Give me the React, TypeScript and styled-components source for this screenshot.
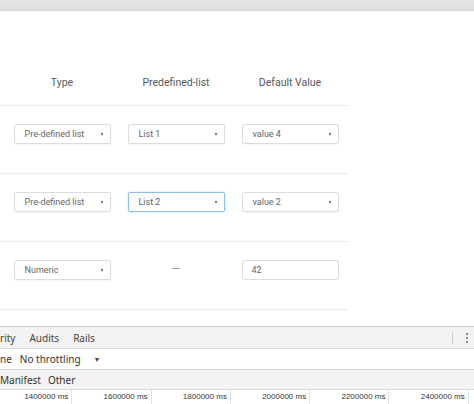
import styled, { createGlobalStyle } from "styled-components";

const Global = createGlobalStyle`
  html, body { margin: 0; padding: 0; background: #fff; overflow: hidden; }
  * { box-sizing: border-box; }
`;

type Cell =
  | { kind: "select"; value: string; focused?: boolean }
  | { kind: "input"; value: string }
  | { kind: "none" };

const rows: Cell[][] = [
  [
    { kind: "select", value: "Pre-defined list" },
    { kind: "select", value: "List 1" },
    { kind: "select", value: "value 4" },
  ],
  [
    { kind: "select", value: "Pre-defined list" },
    { kind: "select", value: "List 2", focused: true },
    { kind: "select", value: "value 2" },
  ],
  [
    { kind: "select", value: "Numeric" },
    { kind: "none" },
    { kind: "input", value: "42" },
  ],
];

const ticks = ["1400000 ms", "1600000 ms", "1800000 ms", "2000000 ms", "2200000 ms", "2400000 ms"];

export default function App() {
  return (
    <Page>
      <Global />
      <TopBar />
      <Content>
        <Table>
          <HeaderRow>
            <HeadCell>Type</HeadCell>
            <HeadCell>Predefined-list</HeadCell>
            <HeadCell>Default Value</HeadCell>
          </HeaderRow>
          {rows.map((row, i) => (
            <Row key={i}>
              {row.map((cell, j) => (
                <BodyCell key={j}>
                  {cell.kind === "select" && (
                    <Select $focused={cell.focused}>
                      <span>{cell.value}</span>
                      <Caret />
                    </Select>
                  )}
                  {cell.kind === "input" && <Input>{cell.value}</Input>}
                  {cell.kind === "none" && <Empty>---</Empty>}
                </BodyCell>
              ))}
            </Row>
          ))}
        </Table>
      </Content>
      <DevTools>
        <TabBar>
          <Tab>rity</Tab>
          <Tab>Audits</Tab>
          <Tab>Rails</Tab>
          <Spacer />
          <Separator />
          <Kebab>
            <i />
            <i />
            <i />
          </Kebab>
        </TabBar>
        <ThrottleBar>
          <ToolText>ne</ToolText>
          <ToolText>No throttling</ToolText>
          <DropArrow>▼</DropArrow>
        </ThrottleBar>
        <FilterBar>
          <ToolText>Manifest</ToolText>
          <ToolText>Other</ToolText>
        </FilterBar>
        <Timeline>
          {ticks.map((t) => (
            <Tick key={t}>{t}</Tick>
          ))}
        </Timeline>
      </DevTools>
    </Page>
  );
}

const Page = styled.div`
  width: 474px;
  height: 404px;
  display: flex;
  flex-direction: column;
  overflow: hidden;
`;

const TopBar = styled.div`
  height: 11px;
  flex: none;
  background: linear-gradient(#e6e6e6, #dedede);
  border-bottom: 1px solid #d8d8d8;
`;

const Content = styled.div`
  flex: 1;
  background: #fff;
`;

const Table = styled.div`
  width: 348px;
  display: flex;
  flex-direction: column;
`;

const HeaderRow = styled.div`
  height: 95px;
  display: grid;
  grid-template-columns: repeat(3, 114px);
  padding-left: 5px;
  align-items: end;
  padding-bottom: 15px;
  border-bottom: 1px solid #ebebeb;
`;

const HeadCell = styled.div`
  font-family: Roboto, "Liberation Sans", sans-serif;
  font-size: 10.5px;
  line-height: 14px;
  color: #595959;
  text-align: center;
`;

const Row = styled.div`
  height: 68px;
  display: grid;
  grid-template-columns: repeat(3, 114px);
  padding-left: 5px;
  padding-top: 18px;
  border-bottom: 1px solid #ebebeb;
`;

const BodyCell = styled.div`
  display: flex;
  justify-content: center;
  align-items: flex-start;
`;

const Select = styled.div<{ $focused?: boolean }>`
  width: 97px;
  height: 20px;
  display: flex;
  align-items: center;
  justify-content: space-between;
  padding: 0 7px 0 10px;
  background: #fff;
  border: 1px solid ${(p) => (p.$focused ? "#8ec0ea" : "#dcdcdc")};
  border-radius: 2px;
  box-shadow: ${(p) =>
    p.$focused ? "0 0 2px rgba(102, 175, 233, 0.5)" : "0 1px 1px rgba(0, 0, 0, 0.04)"};
  font-family: Roboto, "Liberation Sans", sans-serif;
  font-size: 9px;
  color: #666;
`;

const Caret = styled.span`
  width: 0;
  height: 0;
  border-left: 1.5px solid transparent;
  border-right: 1.5px solid transparent;
  border-top: 3px solid #444;
`;

const Input = styled.div`
  width: 97px;
  height: 20px;
  display: flex;
  align-items: center;
  padding: 0 9px;
  border: 1px solid #dcdcdc;
  border-radius: 2px;
  font-family: Roboto, "Liberation Sans", sans-serif;
  font-size: 9px;
  color: #666;
`;

const Empty = styled.div`
  margin-top: 3px;
  font-family: Roboto, "Liberation Sans", sans-serif;
  font-size: 9px;
  color: #666;
`;

const DevTools = styled.div`
  flex: none;
  border-top: 1px solid #cdcdcd;
  font-family: "Noto Sans", "Liberation Sans", sans-serif;
  color: #333;
`;

const TabBar = styled.div`
  height: 22px;
  display: flex;
  align-items: center;
  gap: 14px;
  background: #f3f3f3;
  border-bottom: 1px solid #dadada;
`;

const Tab = styled.span`
  font-size: 10px;
  color: #444;
`;

const Spacer = styled.div`
  flex: 1;
`;

const Separator = styled.div`
  width: 1px;
  height: 12px;
  background: #ccc;
  margin-right: -6px;
`;

const Kebab = styled.div`
  width: 12px;
  display: flex;
  flex-direction: column;
  align-items: center;
  gap: 2px;
  margin-right: 1px;
  i {
    width: 2px;
    height: 2px;
    background: #666;
    border-radius: 1px;
  }
`;

const ThrottleBar = styled.div`
  height: 21px;
  display: flex;
  align-items: center;
  gap: 8px;
  background: #fff;
  border-bottom: 1px solid #dadada;
`;

const ToolText = styled.span`
  font-size: 10px;
  color: #333;
`;

const DropArrow = styled.span`
  font-size: 7px;
  color: #444;
  margin-left: 5px;
`;

const FilterBar = styled.div`
  height: 20px;
  display: flex;
  align-items: center;
  gap: 7px;
  background: #f3f3f3;
  border-bottom: 1px solid #dadada;
`;

const Timeline = styled.div`
  height: 14px;
  display: grid;
  grid-template-columns: repeat(6, 79.3px);
  margin-left: -7px;
`;

const Tick = styled.div`
  text-align: right;
  padding-right: 3px;
  border-right: 1px solid #e2e2e2;
  font-family: "Liberation Sans", sans-serif;
  font-size: 8px;
  line-height: 14px;
  color: #333;
`;
